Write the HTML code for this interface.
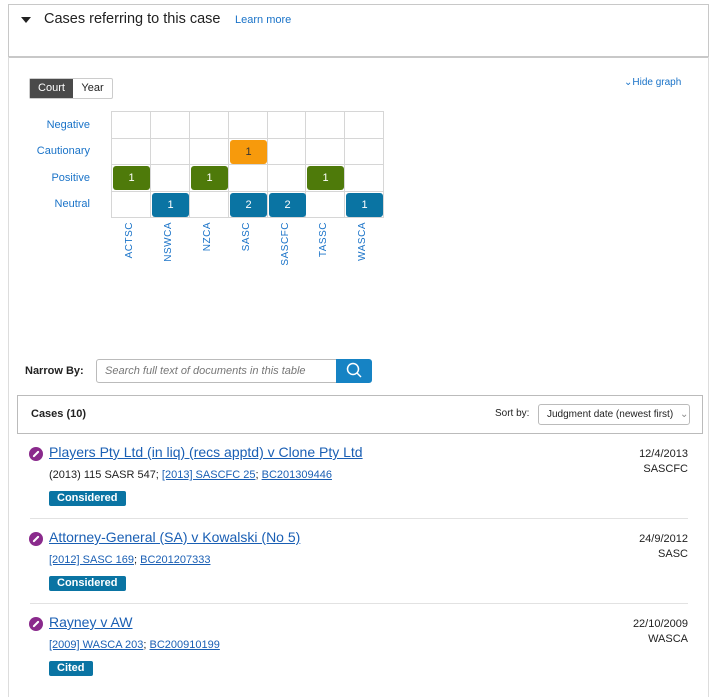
<!DOCTYPE html>
<html><head><meta charset="utf-8"><style>
*{box-sizing:border-box;margin:0;padding:0}
body{width:718px;height:686px;background:#fff;font-family:"Liberation Sans",Arial,sans-serif;position:relative;overflow:hidden;color:#222}
.a{position:absolute}
.blue{color:#1a73c8}
.cell{position:absolute;width:39px;height:26px;border-right:1px solid #d6d6d6;border-bottom:1px solid #d6d6d6}
.chip{position:absolute;width:37px;height:24px;border-radius:3px;color:#fff;font-size:11px;text-align:center;line-height:24px}
.g{background:#4e7a0a}.b{background:#0a74a3}.o{background:#f79a0c;color:#333}
.rl{position:absolute;right:628px;font-size:11px;color:#1a73c8;text-align:right}
.cl{position:absolute;top:222px;font-size:10px;color:#1a73c8;writing-mode:vertical-rl;transform:rotate(180deg);letter-spacing:.5px;width:12px}
.title{position:absolute;left:49px;font-size:14px;color:#1a5fb4;text-decoration:underline}
.cit{position:absolute;left:49px;font-size:11px;color:#222}
.cit a{color:#1a5fb4;text-decoration:underline}
.tag{position:absolute;left:49px;height:15px;padding:0 8px;background:#0a74a3;color:#fff;font-size:11px;font-weight:bold;line-height:15px;border-radius:2px}
.icon{position:absolute;left:29px;width:14px;height:14px;border-radius:50%;background:#8a2a8c}
.icon:after{content:"";position:absolute;left:3px;top:6px;width:8px;height:2px;background:#fff;transform:rotate(-45deg);border-radius:1px}
.dt{position:absolute;right:30px;font-size:11px;text-align:right;line-height:15px}
</style></head><body>
<div class="a" style="left:8px;top:4px;width:701px;height:54px;border:1px solid #c8c8c8;border-bottom:2px solid #c8c8c8"></div>
<div class="a" style="left:8px;top:57px;width:1px;height:640px;background:#ddd"></div>
<div class="a" style="left:708px;top:57px;width:1px;height:640px;background:#ddd"></div>
<div class="a" style="left:21px;top:17px;width:0;height:0;border-left:5px solid transparent;border-right:5px solid transparent;border-top:6px solid #222"></div>
<div class="a" style="left:44px;top:11px;font-size:14.5px;color:#222">Cases referring to this case</div>
<div class="a" style="left:235px;top:14px;font-size:11px" class="blue"><span style="color:#1a73c8">Learn more</span></div>
<div class="a" style="left:29px;top:78px;width:84px;height:21px;border:1px solid #ccc;border-radius:2px"></div>
<div class="a" style="left:30px;top:79px;width:43px;height:19px;background:#4a4a4a;color:#fff;font-size:11px;line-height:19px;text-align:center">Court</div>
<div class="a" style="left:73px;top:79px;width:39px;height:19px;color:#222;font-size:11px;line-height:19px;text-align:center">Year</div>
<div class="a" style="left:624px;top:77px;font-size:10px;color:#1a73c8">&#8964;Hide graph</div>
<div class="rl" style="top:119px">Negative</div>
<div class="rl" style="top:145px">Cautionary</div>
<div class="rl" style="top:172px">Positive</div>
<div class="rl" style="top:198px">Neutral</div>
<div class="a" style="left:111px;top:111px;width:273px;height:107px;border-left:1px solid #d6d6d6;border-top:1px solid #d6d6d6"></div>
<div id="grid"></div>
<script>
var xs=[111,150,189,228,267,305,344],ys=[111,138,164,191],h='';
for(var r=0;r<4;r++)for(var c=0;c<7;c++)h+='<div class="cell" style="left:'+(xs[c]+1)+'px;top:'+(ys[r]+1)+'px;width:'+((c<6?xs[c+1]:383)-xs[c])+'px;height:'+((r<3?ys[r+1]:217)-ys[r])+'px"></div>';
var ch=[[1,3,'o','1'],[2,0,'g','1'],[2,2,'g','1'],[2,5,'g','1'],[3,1,'b','1'],[3,3,'b','2'],[3,4,'b','2'],[3,6,'b','1']];
ch.forEach(function(k){h+='<div class="chip '+k[2]+'" style="left:'+(xs[k[1]]+2)+'px;top:'+(ys[k[0]]+2)+'px">'+k[3]+'</div>'});
var n=['ACTSC','NSWCA','NZCA','SASC','SASCFC','TASSC','WASCA'];
n.forEach(function(t,i){h+='<div class="cl" style="left:'+(xs[i]+13)+'px">'+t+'</div>'});
document.getElementById('grid').innerHTML=h;
</script>
<div class="a" style="left:25px;top:365px;font-size:11px;font-weight:bold">Narrow By:</div>
<div class="a" style="left:96px;top:359px;width:241px;height:24px;border:1px solid #bbb;border-radius:3px 0 0 3px;font-size:11px;font-style:italic;color:#777;line-height:22px;padding-left:8px">Search full text of documents in this table</div>
<div class="a" style="left:336px;top:359px;width:36px;height:24px;background:#1683c4;border-radius:0 3px 3px 0">
<svg width="36" height="24"><circle cx="17" cy="10" r="5.5" fill="none" stroke="#fff" stroke-width="1.5"/><line x1="21" y1="14" x2="25" y2="18" stroke="#fff" stroke-width="1.5"/></svg></div>
<div class="a" style="left:17px;top:395px;width:686px;height:39px;border:1px solid #bbb"></div>
<div class="a" style="left:31px;top:408px;font-size:11px;font-weight:bold">Cases (10)</div>
<div class="a" style="left:495px;top:408px;font-size:10px">Sort by:</div>
<div class="a" style="left:538px;top:404px;width:152px;height:21px;border:1px solid #bbb;border-radius:3px;font-size:10px;line-height:19px;padding-left:8px">Judgment date (newest first) <span style="color:#888;margin-left:4px">&#8964;</span></div>

<div class="icon" style="top:447px"></div>
<div class="title" style="top:444px">Players Pty Ltd (in liq) (recs apptd) v Clone Pty Ltd</div>
<div class="cit" style="top:469px">(2013) 115 SASR 547; <a>[2013] SASCFC 25</a>; <a>BC201309446</a></div>
<div class="tag" style="top:491px">Considered</div>
<div class="dt" style="top:447px">12/4/2013<br>SASCFC</div>
<div class="a" style="left:30px;top:518px;width:658px;height:1px;background:#e2e2e2"></div>

<div class="icon" style="top:532px"></div>
<div class="title" style="top:529px">Attorney-General (SA) v Kowalski (No 5)</div>
<div class="cit" style="top:554px"><a>[2012] SASC 169</a>; <a>BC201207333</a></div>
<div class="tag" style="top:576px">Considered</div>
<div class="dt" style="top:532px">24/9/2012<br>SASC</div>
<div class="a" style="left:30px;top:603px;width:658px;height:1px;background:#e2e2e2"></div>

<div class="icon" style="top:617px"></div>
<div class="title" style="top:614px">Rayney v AW</div>
<div class="cit" style="top:639px"><a>[2009] WASCA 203</a>; <a>BC200910199</a></div>
<div class="tag" style="top:661px">Cited</div>
<div class="dt" style="top:617px">22/10/2009<br>WASCA</div>
</body></html>
